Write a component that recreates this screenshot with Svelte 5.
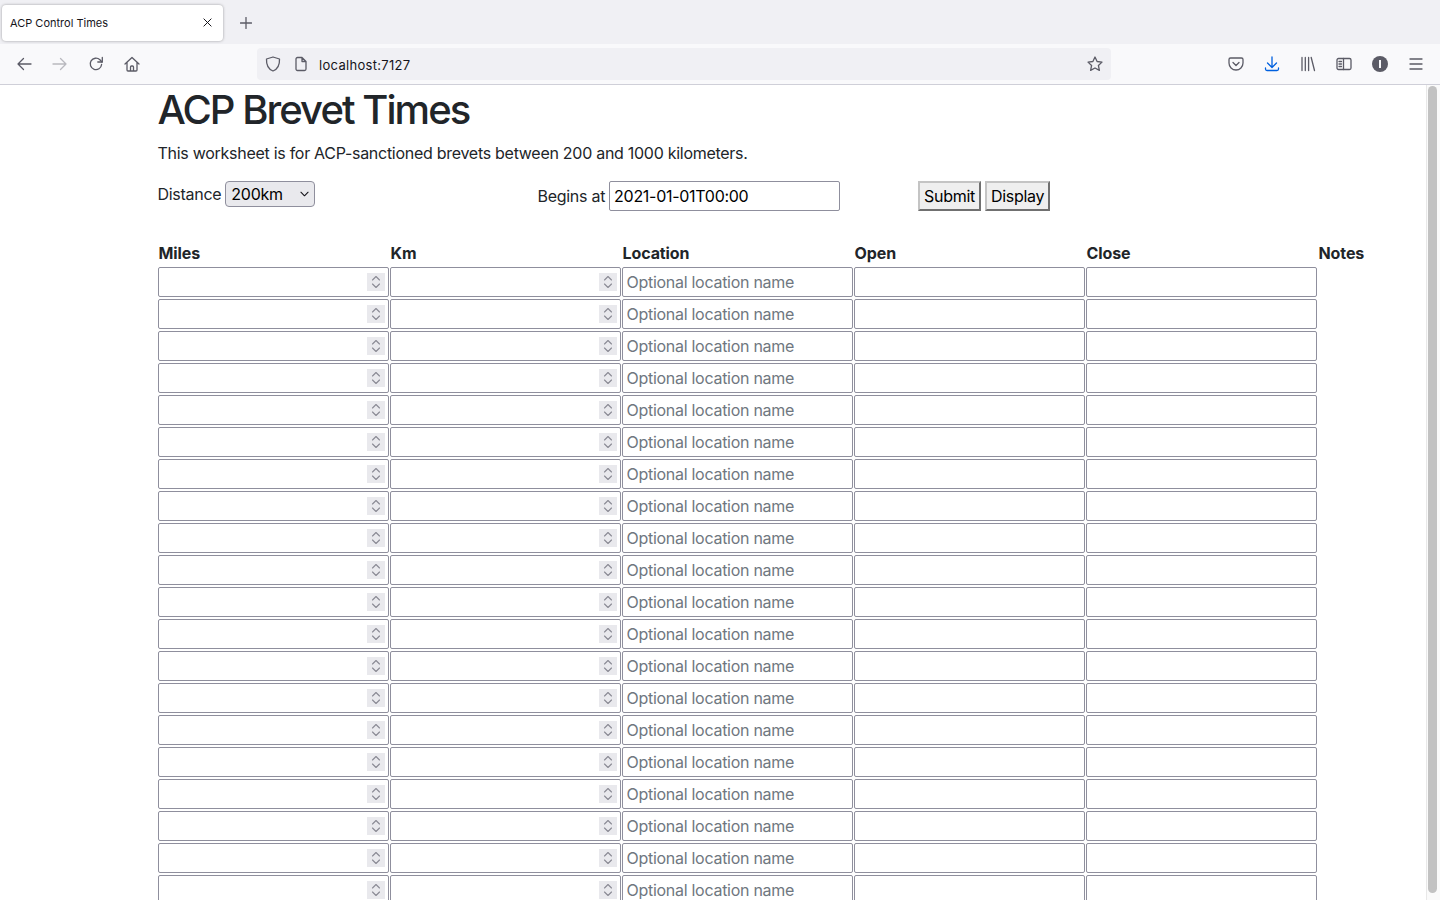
<script>
  const rows = Array.from({ length: 20 }, (_, i) => i);
</script>

<div class="window">
  <div class="tabbar">
    <div class="tab">
      <span class="tabtitle">ACP Control Times</span>
      <svg class="ic10" viewBox="0 0 10 10"><path d="M1 1l8 8M9 1l-8 8" /></svg>
    </div>
    <svg class="plus" viewBox="0 0 12 12"><path d="M6 .5v11M.5 6h11" /></svg>
  </div>

  <div class="toolbar">
    <div class="navs">
      <svg class="ti" viewBox="0 0 16 16"><path d="M15 8H2M7.5 2.5L2 8l5.5 5.5" /></svg>
      <svg class="ti dim" viewBox="0 0 16 16"><path d="M1 8h13M8.500 2.500L14 8l-5.500 5.500" /></svg>
      <svg class="ti" viewBox="0 0 16 16"><path d="M13.600 8.500A5.700 5.700 0 1 1 11.900 3.800L14 6" /><path d="M14.300 1.500V6H9.800" /></svg>
      <svg class="ti" viewBox="0 0 16 16"><path d="M1 8l7-6.500L15 8M3 6.500V14a1 1 0 0 0 1 1h8a1 1 0 0 0 1-1V6.500M6.500 15v-4a1 1 0 0 1 1-1h1a1 1 0 0 1 1 1v4" /></svg>
    </div>
    <div class="urlbar">
      <svg class="ti" viewBox="0 0 16 16"><path d="M8 1L14.500 3c.300 6-1.500 10-6.500 12C3 13 1.200 9 1.500 3z" /></svg>
      <svg class="ti docicon" viewBox="0 0 16 16"><path d="M3 3a1.500 1.500 0 0 1 1.500-1.500H9L13 5.500V13a1.500 1.500 0 0 1-1.500 1.500h-7A1.500 1.500 0 0 1 3 13zM9 1.500V5.500h4" /></svg>
      <span class="url">localhost:7127</span>
      <svg class="ti" viewBox="0 0 16 16"><path d="M8 1l2.100 4.500 4.900.6-3.600 3.400 1 4.900L8 12l-4.400 2.400 1-4.900L1 6.100l4.900-.6z" /></svg>
    </div>
    <div class="tools">
      <svg class="ti" viewBox="0 0 16 16"><path d="M2.500 2h11A1.500 1.500 0 0 1 15 3.500V7a7 7 0 0 1-14 0V3.500A1.500 1.500 0 0 1 2.500 2zM5 6.500L8 9.500l3-3" /></svg>
      <svg class="ti blue" viewBox="0 0 16 16"><path d="M8 1v10M3.500 7L8 11.500 12.500 7M1.500 12v1a1.500 1.500 0 0 0 1.500 1.500h10a1.500 1.500 0 0 0 1.500-1.500v-1" /></svg>
      <svg class="ti" viewBox="0 0 16 16"><path d="M2 1.500v13M5.300 1.500v13M8.600 1.500v13M11.200 1.500l3.300 13" /></svg>
      <svg class="ti" viewBox="0 0 16 16"><rect x="1" y="2.500" width="14" height="11" rx="1.500" /><path d="M7.500 2.500v11M3 5.500h2.500M3 8h2.500M3 10.500h2.500" /></svg>
      <svg class="ti" viewBox="0 0 16 16"><circle class="fill" cx="8" cy="8" r="8" /><rect class="hole" x="7" y="4" width="2" height="8" /></svg>
      <svg class="ti" viewBox="0 0 16 16"><path d="M2 3h12M2 8h12M2 13h12" /></svg>
    </div>
  </div>

  <div class="viewport">
    <main class="sheet">
      <div class="content">
        <h1>ACP Brevet Times</h1>
        <p class="lead">This worksheet is for ACP-sanctioned brevets between 200 and 1000 kilometers.</p>

        <form class="controls" onsubmit={(e) => e.preventDefault()}>
          <div class="distance">
            <label for="dist">Distance</label>
            <span class="selectwrap">
              <select id="dist">
                <option>200km</option>
                <option>300km</option>
                <option>400km</option>
                <option>600km</option>
                <option>1000km</option>
              </select>
              <svg class="chev" viewBox="0 0 10 6"><path d="M1 1l4 4 4-4" /></svg>
            </span>
          </div>
          <div class="begins">
            <label for="begin">Begins at</label>
            <input id="begin" class="field" type="text" value="2021-01-01T00:00" />
          </div>
          <div class="actions">
            <button type="button">Submit</button>
            <button type="button">Display</button>
          </div>
        </form>

        <table>
          <thead>
            <tr>
              <th>Miles</th>
              <th>Km</th>
              <th>Location</th>
              <th>Open</th>
              <th>Close</th>
              <th>Notes</th>
            </tr>
          </thead>
          <tbody>
            {#each rows as r (r)}
              <tr>
                {#each [0, 1] as c (c)}
                  <td>
                    <span class="numwrap">
                      <input class="field" type="text" aria-label={c === 0 ? 'Miles' : 'Km'} />
                      <span class="spin">
                        <svg viewBox="0 0 10 14"><path d="M1.500 5L5 1.500 8.500 5M1.500 9L5 12.500 8.500 9" /></svg>
                      </span>
                    </span>
                  </td>
                {/each}
                <td><input class="field" type="text" placeholder="Optional location name" /></td>
                <td><input class="field" type="text" aria-label="Open" /></td>
                <td><input class="field" type="text" aria-label="Close" /></td>
                <td></td>
              </tr>
            {/each}
          </tbody>
        </table>
      </div>
    </main>
    <div class="scrollbar"><div class="thumb"></div></div>
  </div>
</div>

<style>
  :global(body) {
    margin: 0;
    overflow: hidden;
    background: #fff;
  }
  .window {
    height: 900px;
    display: flex;
    flex-direction: column;
    font-family: Inter, "Liberation Sans", sans-serif;
    color: #212529;
    overflow: hidden;
  }
  svg {
    display: block;
    fill: none;
    stroke: #5b5b66;
    stroke-width: 1.3;
    stroke-linecap: round;
    stroke-linejoin: round;
    flex: none;
  }
  .tabbar {
    height: 44px;
    flex: none;
    background: #f0f0f4;
    display: flex;
    align-items: center;
    padding-left: 2px;
    box-sizing: border-box;
  }
  .tab {
    width: 221px;
    height: 36px;
    margin-top: 1px;
    background: #fff;
    border-radius: 4px;
    box-shadow: 0 0 3px rgba(0, 0, 0, 0.35);
    display: flex;
    align-items: center;
    justify-content: space-between;
    padding: 0 11px 0 8px;
    box-sizing: border-box;
  }
  .tabtitle {
    font-size: 11px;
    color: #15141a;
  }
  .ic10 {
    width: 9px;
    height: 9px;
    stroke: #15141a;
    stroke-width: 1.1;
  }
  .plus {
    width: 12px;
    height: 12px;
    margin-left: 17px;
    margin-top: 1px;
  }
  .toolbar {
    height: 40px;
    flex: none;
    background: #f9f9fb;
    border-bottom: 1px solid #cfcfd8;
    display: flex;
    align-items: center;
  }
  .ti {
    width: 16px;
    height: 16px;
  }
  .navs {
    display: flex;
    gap: 20px;
    margin-left: 16px;
    width: 241px;
    flex: none;
  }
  .dim {
    opacity: 0.4;
  }
  .urlbar {
    width: 854px;
    height: 32px;
    background: #f0f0f4;
    border-radius: 4px;
    display: flex;
    align-items: center;
    flex: none;
    box-sizing: border-box;
    padding: 0 8px;
  }
  .docicon {
    margin-left: 12px;
  }
  .url {
    font-size: 13px;
    letter-spacing: 0.3px;
    margin-left: 10px;
    padding-top: 2px;
    color: #15141a;
    flex: 1;
  }
  .tools {
    display: flex;
    gap: 20px;
    margin-left: 117px;
  }
  .blue {
    stroke: #0060df;
  }
  .fill {
    fill: #5b5b66;
    stroke: none;
  }
  .hole {
    fill: #f9f9fb;
    stroke: none;
  }
  .viewport {
    flex: 1;
    min-height: 0;
    display: flex;
    background: #fff;
  }
  .sheet {
    flex: 1;
    min-width: 0;
    overflow: hidden;
  }
  .content {
    padding: 1px 0 0 157.5px;
    font-size: 16px;
    line-height: 24px;
    letter-spacing: -0.28px;
  }
  h1 {
    margin: 0;
    font-size: 40px;
    line-height: 48px;
    font-weight: 500;
    letter-spacing: -1.95px;
  }
  .lead {
    margin: 7px 0 0;
  }
  .controls {
    display: flex;
    align-items: flex-start;
    margin-top: 16px;
    height: 58px;
  }
  .distance {
    width: 380px;
    display: flex;
    align-items: center;
    gap: 4px;
  }
  .selectwrap {
    position: relative;
    display: block;
  }
  select {
    appearance: none;
    display: block;
    width: 90px;
    height: 26px;
    margin: 0;
    background: #e9e9ed;
    border: 1px solid #8f8f9d;
    border-radius: 4px;
    padding: 0 5px;
    font: inherit;
    letter-spacing: inherit;
    color: #000;
  }
  .chev {
    position: absolute;
    right: 6px;
    top: 10px;
    width: 9px;
    height: 6px;
    stroke: #15141a;
    stroke-width: 1.2;
    pointer-events: none;
  }
  .begins {
    width: 380.5px;
    display: flex;
    align-items: center;
    gap: 4px;
  }
  .field {
    display: block;
    width: 231px;
    height: 30px;
    box-sizing: border-box;
    margin: 0;
    padding: 0 4px;
    border: 1px solid #8f8f9d;
    border-radius: 2px;
    background: #fff;
    font: inherit;
    letter-spacing: inherit;
    color: #000;
    outline: none;
  }
  .field::placeholder {
    color: #6f7780;
    opacity: 1;
  }
  .actions {
    display: flex;
    gap: 4px;
  }
  button {
    height: 30px;
    margin: 0;
    padding: 0 4px;
    background: #efefef;
    border: 2px outset #c4c4c4;
    font: inherit;
    letter-spacing: inherit;
    color: #000;
  }
  table {
    border-collapse: separate;
    border-spacing: 0;
    table-layout: fixed;
    width: 1392px;
  }
  th {
    box-sizing: border-box;
    width: 232px;
    height: 27px;
    padding: 0 0 1px 1px;
    text-align: left;
    font-weight: 700;
    vertical-align: bottom;
    line-height: 24px;
    letter-spacing: -0.1px;
  }
  td {
    width: 232px;
    height: 32px;
    padding: 0;
    vertical-align: middle;
  }
  .numwrap {
    position: relative;
    display: block;
    width: 231px;
  }
  .spin {
    position: absolute;
    right: 4px;
    top: 6px;
    width: 18px;
    height: 18px;
    background: #e9e9ed;
    display: flex;
    align-items: center;
    justify-content: center;
  }
  .spin svg {
    width: 10px;
    height: 14px;
    stroke: #8a8a94;
    stroke-width: 1.1;
  }
  .scrollbar {
    width: 14px;
    flex: none;
    background: #fafafa;
    border-left: 1px solid #e8e8e8;
    box-sizing: border-box;
    padding: 1px 3px 7px 1px;
  }
  .thumb {
    height: 100%;
    background: #c2c2c2;
    border-radius: 5px;
  }
</style>
